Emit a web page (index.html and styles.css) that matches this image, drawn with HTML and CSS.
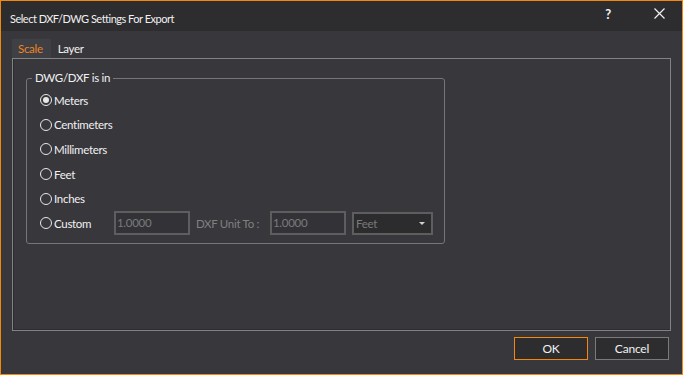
FILE: index.html
```html
<!DOCTYPE html>
<html lang="en">
<head>
  <meta charset="UTF-8" />
  <title>Select DXF/DWG Settings For Export</title>
  <link rel="stylesheet" href="styles.css">
</head>
<body>
  <div class="window">
    <!-- title bar -->
    <div class="titlebar">
      <span class="title">Select DXF/DWG Settings For Export</span>
      <span class="title-btn help">?</span>
      <span class="title-btn close">
        <svg width="11" height="11" viewBox="0 0 11 11"><path d="M0.5 0.5 L10.5 10.5 M10.5 0.5 L0.5 10.5" stroke="#f0f0f0" stroke-width="1.2" fill="none"/></svg>
      </span>
    </div>

    <div class="content">
      <div class="tabs">
        <span class="tab active">Scale</span>
        <span class="tab">Layer</span>
      </div>

      <div class="panel">
        <fieldset class="group">
          <legend>DWG/DXF is in</legend>
          <div class="radio-row"><span class="radio checked"></span>Meters</div>
          <div class="radio-row"><span class="radio"></span>Centimeters</div>
          <div class="radio-row"><span class="radio"></span>Millimeters</div>
          <div class="radio-row"><span class="radio"></span>Feet</div>
          <div class="radio-row"><span class="radio"></span>Inches</div>
          <div class="radio-row custom-row">
            <span class="radio"></span><span class="custom-label">Custom</span>
            <span class="textbox">1.0000</span>
            <span class="unit-label">DXF Unit To :</span>
            <span class="textbox">1.0000</span>
            <span class="select">Feet<span class="arrow"></span></span>
          </div>
        </fieldset>
      </div>

      <div class="buttons">
        <button class="btn default">OK</button>
        <button class="btn">Cancel</button>
      </div>
    </div>
  </div>
</body>
</html>
```

FILE: styles.css
```css
html, body {
  margin: 0;
  padding: 0;
  background: #37373c;
}
body {
  font-family: Lato, "Liberation Sans", sans-serif;
  font-size: 11.5px;
  letter-spacing: -0.3px;
  color: #f1f1f1;
}
.window {
  width: 683px;
  height: 375px;
  box-sizing: border-box;
  border: 1px solid #f5880a;
  background: #37373c;
}
/* title bar */
.titlebar {
  height: 30px;
  background: #2d2d30;
  display: flex;
  align-items: center;
  padding-left: 9px;
}
.title {
  flex-grow: 1;
  font-size: 11px;
  letter-spacing: -0.5px;
  padding-top: 5px;
}
.title-btn {
  width: 26px;
  text-align: center;
  font-weight: bold;
  font-size: 13px;
}
.help {
  margin-right: 25px;
  margin-top: -5px;
}
.close {
  margin-right: 10px;
  margin-top: -5px;
}
/* content */
.content {
  padding: 8px 11px 0 11px;
}
.tabs {
  display: flex;
  height: 19px;
}
.tab {
  padding: 0 7px 0 6px;
  line-height: 19px;
}
.tab.active {
  background: #3f3f46;
  color: #f0841e;
  padding-right: 8px;
  margin-right: 1px;
}
.panel {
  height: 259px;
  border: 1px solid #828282;
  box-shadow: inset 1px -1px 0 #2d2d30;
  padding: 12px 0 0 13px;
}
.group {
  width: 419px;
  height: 173px;
  box-sizing: border-box;
  margin: 0;
  padding: 3px 0 0 13px;
  border: 1px solid #767676;
  border-radius: 3px;
}
.group legend {
  padding: 0 3px;
  margin-left: -8px;
  line-height: 14px;
}
.radio-row {
  display: flex;
  align-items: center;
  height: 24.6px;
}
.radio {
  width: 10px;
  height: 10px;
  border: 1px solid #e8e8e8;
  border-radius: 50%;
  margin-right: 2px;
  display: inline-flex;
  align-items: center;
  justify-content: center;
  flex-shrink: 0;
}
.radio.checked::after {
  content: "";
  width: 6px;
  height: 6px;
  border-radius: 50%;
  background: #e8e8e8;
}
.custom-label {
  width: 60px;
}
.textbox {
  width: 71px;
  height: 20px;
  line-height: 20px;
  border: 2px solid #5e5e5e;
  background: #333337;
  color: #7a7a7a;
  padding-left: 1px;
}
.unit-label {
  color: #808080;
  margin-left: 6px;
  width: 74px;
  white-space: nowrap;
}
.select {
  margin-left: 6px;
  width: 75px;
  height: 19px;
  line-height: 21px;
  border: 2px solid #5e5e5e;
  background: #2c2c2e;
  color: #7a7a7a;
  padding-left: 2px;
  display: flex;
  justify-content: space-between;
  align-items: center;
}
.arrow {
  width: 0;
  height: 0;
  border-left: 3px solid transparent;
  border-right: 3px solid transparent;
  border-top: 3px solid #d0d0d0;
  margin-right: 6px;
}
/* buttons */
.buttons {
  display: flex;
  justify-content: flex-end;
  gap: 7px;
  margin-top: 6px;
  padding-right: 2px;
}
.btn {
  width: 74px;
  height: 23px;
  font-family: Lato, "Liberation Sans", sans-serif;
  font-size: 12px;
  letter-spacing: -0.2px;
  color: #f1f1f1;
  background: #2d2d30;
  border: 1px solid #7a7a7a;
  padding: 0;
  cursor: pointer;
}
.btn.default {
  border-color: #f5880a;
}
```
